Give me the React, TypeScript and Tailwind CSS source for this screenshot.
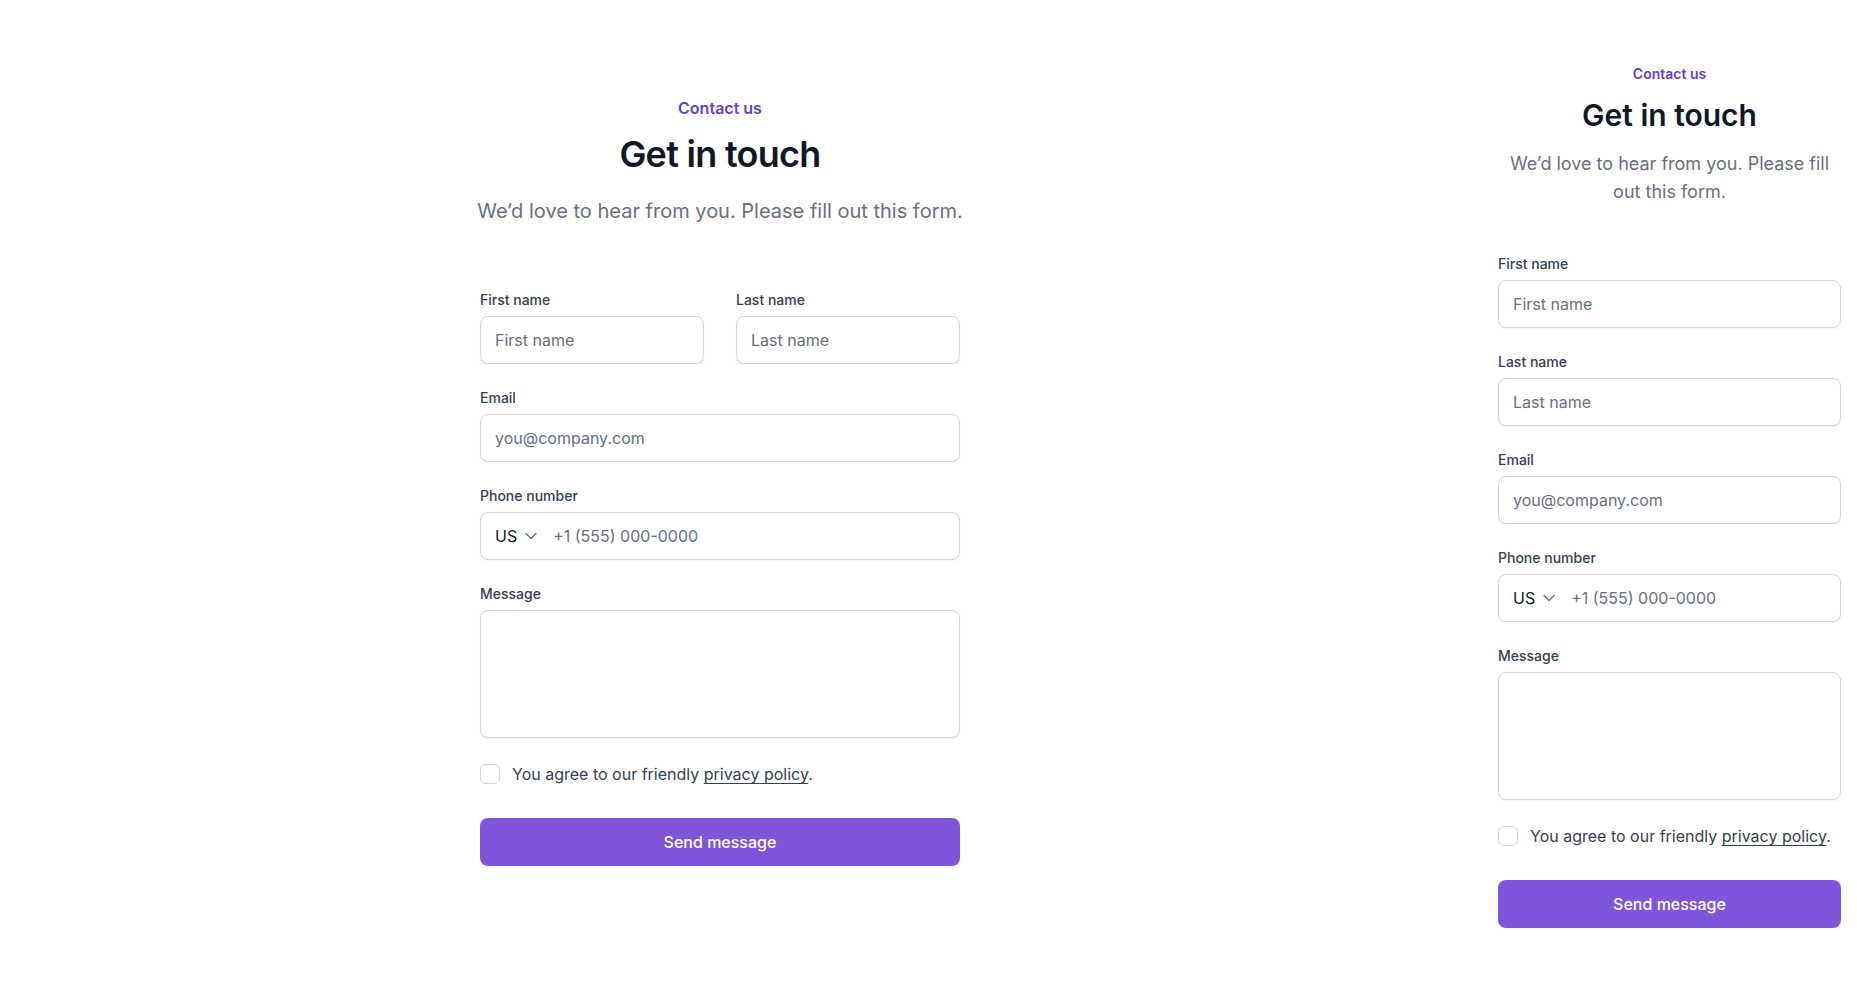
import { ChevronDown } from "lucide-react";
import type { ReactNode } from "react";

function Field({ label, children }: { label: string; children: ReactNode }) {
  return (
    <div className="flex flex-col gap-1.5">
      <label className="text-sm font-medium leading-5 text-[#344054]">{label}</label>
      {children}
    </div>
  );
}

const inputCls =
  "h-12 w-full rounded-lg border border-[#D0D5DD] bg-white px-3.5 text-base leading-6 text-[#101828] shadow-[0_1px_2px_rgba(16,24,40,0.05)] outline-none placeholder:text-[#667085]";

function ContactForm({ mobile = false }: { mobile?: boolean }) {
  return (
    <div className="flex flex-col items-center">
      <p
        className={
          mobile
            ? "text-sm font-semibold leading-5 text-[#6941C6]"
            : "text-base font-semibold leading-6 text-[#6941C6]"
        }
      >
        Contact us
      </p>
      <h1
        className={
          mobile
            ? "mt-3 text-[30px] font-semibold leading-[38px] text-[#101828]"
            : "mt-3 text-[36px] font-semibold leading-[44px] tracking-[-0.02em] text-[#101828]"
        }
      >
        Get in touch
      </h1>
      <p
        className={
          mobile
            ? "mt-4 text-center text-lg leading-7 text-[#667085]"
            : "mt-5 whitespace-nowrap text-center text-xl leading-[30px] text-[#667085]"
        }
      >
        We’d love to hear from you. Please fill out this form.
      </p>

      <form
        className={mobile ? "mt-12 flex w-full flex-col gap-6" : "mt-16 flex w-[480px] flex-col gap-6"}
        onSubmit={(e) => e.preventDefault()}
      >
        <div className={mobile ? "flex flex-col gap-6" : "grid grid-cols-2 gap-8"}>
          <Field label="First name">
            <input className={inputCls} placeholder="First name" />
          </Field>
          <Field label="Last name">
            <input className={inputCls} placeholder="Last name" />
          </Field>
        </div>
        <Field label="Email">
          <input className={inputCls} placeholder="you@company.com" />
        </Field>
        <Field label="Phone number">
          <div className="flex h-12 w-full items-center rounded-lg border border-[#D0D5DD] bg-white shadow-[0_1px_2px_rgba(16,24,40,0.05)]">
            <div className="flex items-center gap-1 pl-3.5 pr-3">
              <span className="text-base leading-6 text-[#101828]">US</span>
              <ChevronDown size={20} strokeWidth={1.6} className="text-[#667085]" />
            </div>
            <input
              className="h-full min-w-0 flex-1 bg-transparent pr-3.5 text-base leading-6 text-[#101828] outline-none placeholder:text-[#667085]"
              placeholder="+1 (555) 000-0000"
            />
          </div>
        </Field>
        <Field label="Message">
          <textarea className="h-32 w-full resize-none rounded-lg border border-[#D0D5DD] bg-white px-3.5 py-3 text-base leading-6 text-[#101828] shadow-[0_1px_2px_rgba(16,24,40,0.05)] outline-none" />
        </Field>
        <div className="flex items-center gap-3">
          <span className="h-5 w-5 shrink-0 rounded-md border border-[#D0D5DD] bg-white" />
          <span className="text-base leading-6 text-[#344054]">
            You agree to our friendly{" "}
            <a className="underline underline-offset-[3px]" href="#">
              privacy policy
            </a>
            .
          </span>
        </div>
        <button
          type="submit"
          className="mt-2 h-12 w-full rounded-lg bg-[#7F56D9] text-base font-medium leading-6 text-white shadow-[0_1px_2px_rgba(16,24,40,0.05)]"
        >
          Send message
        </button>
      </form>
    </div>
  );
}

export default function App() {
  return (
    <div className="flex min-h-screen items-start justify-between bg-white font-['Inter',sans-serif] antialiased">
      <section className="w-[1440px] shrink-0 px-8 pt-24 pb-24">
        <ContactForm />
      </section>
      <section className="w-[375px] shrink-0 px-4 py-16">
        <ContactForm mobile />
      </section>
    </div>
  );
}
